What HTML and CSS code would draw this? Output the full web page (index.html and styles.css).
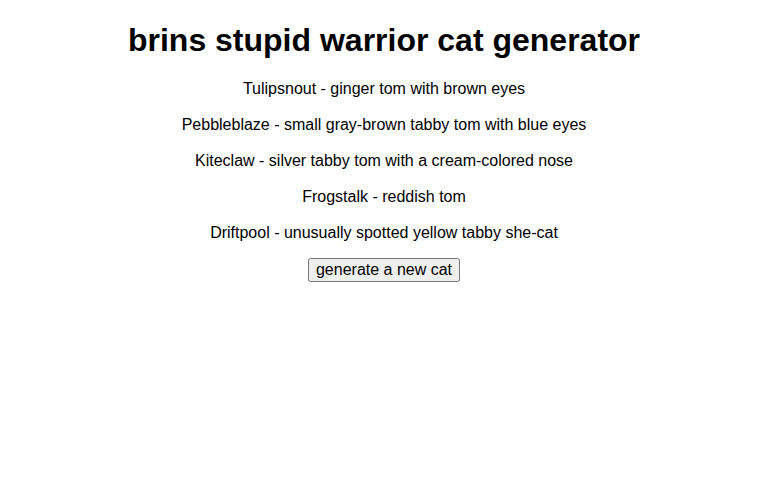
FILE: index.html
```html
<!DOCTYPE html>
<html>
<head>
<meta charset="utf-8">
<title>brins stupid warrior cat generator</title>
<link rel="stylesheet" href="styles.css">
</head>
<body class="page">
<h1 class="title">brins stupid warrior cat generator</h1>
<div class="cats">
<p class="cat">Tulipsnout - ginger tom with brown eyes</p>
<p class="cat">Pebbleblaze - small gray-brown tabby tom with blue eyes</p>
<p class="cat">Kiteclaw - silver tabby tom with a cream-colored nose</p>
<p class="cat">Frogstalk - reddish tom</p>
<p class="cat">Driftpool - unusually spotted yellow tabby she-cat</p>
</div>
<div class="actions">
<button class="gen-btn" type="button">generate a new cat</button>
</div>
</body>
</html>
```
FILE: styles.css
```css
.page {
  margin: 0;
  padding: 0 8px;
  font-family: "Liberation Sans", Arial, sans-serif;
  text-align: center;
  color: #000;
  background: #fff;
}
.title {
  font-size: 32px;
  font-weight: bold;
  line-height: 36.8px;
  margin: 22.44px 0 19.76px;
}
.cats {
  margin-bottom: 15px;
}
.cat {
  font-size: 16px;
  line-height: 20px;
  margin: 16px 0 0;
}
.actions {
  padding-top: 0;
}
.gen-btn {
  font-family: "Liberation Sans", Arial, sans-serif;
  font-size: 16px;
  margin: 0;
}
```
